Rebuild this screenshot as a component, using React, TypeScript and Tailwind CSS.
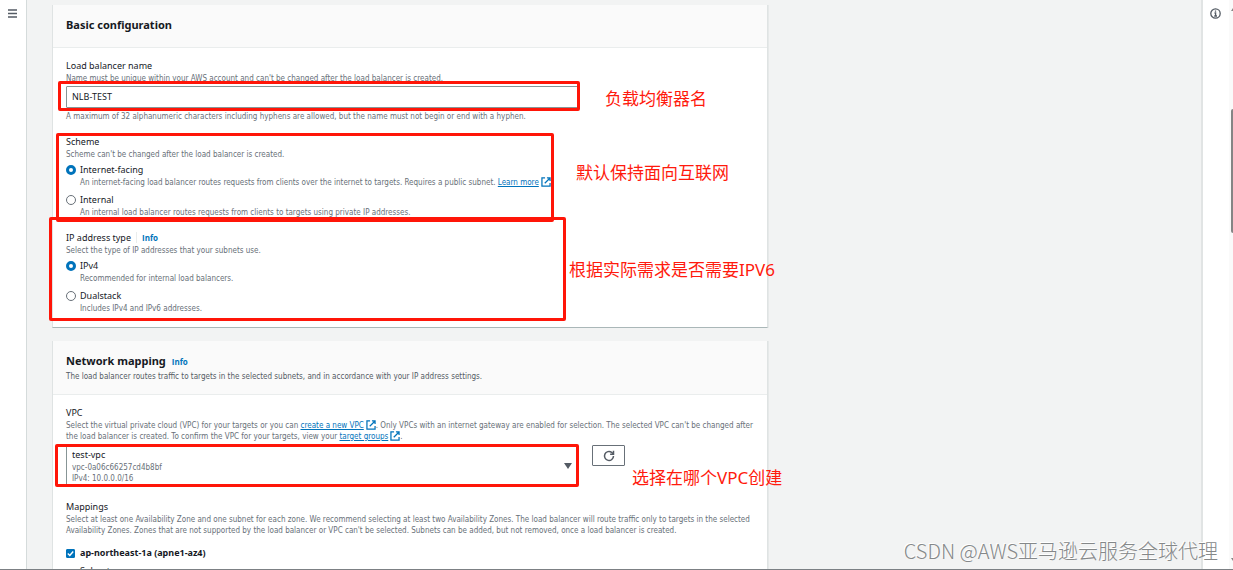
import type {ReactNode} from 'react';
import {clsx} from 'clsx';

const LABEL = 'block text-[9px] leading-[14px] text-[#16191f]';
const HINT = "font-['DejaVu_Sans_Condensed',sans-serif] text-[8px] leading-[11px] text-[#687078]";
const LINK = 'text-[#0073bb] underline';
const NOTE =
  "absolute whitespace-nowrap font-['Noto_Sans','Noto_Sans_CJK_SC',sans-serif] text-[17px] leading-6 text-[#ff1a0d]";
const MARK = 'pointer-events-none absolute rounded-xs border-[#ff1508] border-3';

function ExternalIcon() {
  return (
    <svg
      aria-hidden
      viewBox="0 0 16 16"
      className="ml-0.5 inline-block size-[10px] align-[-2px]"
      fill="none"
      stroke="currentColor"
      strokeWidth="2"
    >
      <path d="M6.5 1.5H1.5V14.5H14.5V9.5" />
      <path d="M9.5 1.5H14.5V6.5M14.5 1.5L6 10" />
    </svg>
  );
}

function ExternalLink({children}: {children: ReactNode}) {
  return (
    <a href="#" className={LINK}>
      {children}
      <ExternalIcon />
    </a>
  );
}

function InfoLink({className}: {className?: string}) {
  return (
    <a
      href="#"
      className={clsx("font-['Open_Sans',sans-serif] text-[8px] font-bold text-[#0073bb]", className)}
    >
      Info
    </a>
  );
}

function Panel({header, children}: {header: ReactNode; children: ReactNode}) {
  return (
    <section className="relative w-full max-w-[716px] border-x border-b border-x-[#dfe3e3] border-b-[#aab7b8] bg-white shadow-[1px_0_0_#e6e9e9]">
      <header className="border-b border-[#eaeded] bg-[#fafafa] px-[13px]">{header}</header>
      <div className="pb-[13px] pl-[13px] pr-2 pt-[11px]">{children}</div>
    </section>
  );
}

function RadioOption({
  name,
  value,
  label,
  checked,
  children
}: {
  name: string;
  value: string;
  label: string;
  checked?: boolean;
  children: ReactNode;
}) {
  const id = `${name}-${value}`;
  return (
    <div className="flex gap-1">
      <input
        id={id}
        type="radio"
        name={name}
        value={value}
        defaultChecked={checked}
        className="mt-[2px] size-[10px] shrink-0 appearance-none rounded-full border border-[#687078] bg-white checked:border-3 checked:border-[#0073bb]"
      />
      <div>
        <label htmlFor={id} className={LABEL}>
          {label}
        </label>
        <p className={HINT}>{children}</p>
      </div>
    </div>
  );
}

function BasicConfiguration() {
  return (
    <Panel
      header={
        <h2 className="pb-[14px] pt-3 text-[11px] font-bold leading-4 text-[#16191f]">
          Basic configuration
        </h2>
      }
    >
      <div>
        <label htmlFor="lb-name" className={LABEL}>
          Load balancer name
        </label>
        <p className={HINT}>
          Name must be unique within your AWS account and can't be changed after the load
          balancer is created.
        </p>
        <input
          id="lb-name"
          type="text"
          defaultValue="NLB-TEST"
          className="mb-[3px] mt-[2px] block h-[22px] w-full max-w-[512px] rounded-[1px] border border-[#879596] px-[5px] pb-0.5 text-[9px] text-[#16191f]"
        />
        <p className={HINT}>
          A maximum of 32 alphanumeric characters including hyphens are allowed, but the name
          must not begin or end with a hyphen.
        </p>
      </div>

      <fieldset className="mt-[13px]">
        <legend className={LABEL}>Scheme</legend>
        <p className={HINT}>Scheme can't be changed after the load balancer is created.</p>
        <div className="mt-[3px] flex flex-col gap-[5px]">
          <RadioOption name="scheme" value="internet-facing" label="Internet-facing" checked>
            An internet-facing load balancer routes requests from clients over the internet to
            targets. Requires a public subnet. <ExternalLink>Learn more</ExternalLink>
          </RadioOption>
          <RadioOption name="scheme" value="internal" label="Internal">
            An internal load balancer routes requests from clients to targets using private IP
            addresses.
          </RadioOption>
        </div>
      </fieldset>

      <fieldset className="mt-[13px]">
        <legend className={LABEL}>
          IP address type
          <InfoLink className="ml-[5px] border-l border-[#eaeded] pl-[5px]" />
        </legend>
        <p className={HINT}>Select the type of IP addresses that your subnets use.</p>
        <div className="mt-[3px] flex flex-col gap-[5px]">
          <RadioOption name="ip-type" value="ipv4" label="IPv4" checked>
            Recommended for internal load balancers.
          </RadioOption>
          <RadioOption name="ip-type" value="dualstack" label="Dualstack">
            Includes IPv4 and IPv6 addresses.
          </RadioOption>
        </div>
      </fieldset>

      <div className={clsx(MARK, 'left-[5px] top-[76px] h-[30px] w-[522px]')} />
      <div className={clsx(MARK, 'left-[3px] top-[128px] h-[89px] w-[498px]')} />
      <div className={clsx(MARK, '-left-[4px] top-[212px] h-[104px] w-[517px]')} />
      <span className={clsx(NOTE, 'left-[552px] top-[82px]')}>负载均衡器名</span>
      <span className={clsx(NOTE, 'left-[523px] top-[156px]')}>默认保持面向互联网</span>
      <span className={clsx(NOTE, 'left-[516px] top-[253px]')}>根据实际需求是否需要IPV6</span>
    </Panel>
  );
}

function NetworkMapping() {
  return (
    <Panel
      header={
        <div className="py-3">
          <h2 className="text-[11px] font-bold leading-4 text-[#16191f]">
            Network mapping
            <InfoLink className="ml-[6px]" />
          </h2>
          <p className="mt-px font-['DejaVu_Sans_Condensed',sans-serif] text-[8px] leading-[11px] text-[#545b64]">
            The load balancer routes traffic to targets in the selected subnets, and in
            accordance with your IP address settings.
          </p>
        </div>
      }
    >
      <label htmlFor="vpc" className={LABEL}>
        VPC
      </label>
      <p className={HINT}>
        Select the virtual private cloud (VPC) for your targets or you can{' '}
        <ExternalLink>create a new VPC</ExternalLink>. Only VPCs with an internet gateway are
        enabled for selection. The selected VPC can't be changed after the load balancer is
        created. To confirm the VPC for your targets, view your{' '}
        <ExternalLink>target groups</ExternalLink>.
      </p>
      <div className="mt-[3px] flex items-start gap-[14px]">
        <div className="grid w-full max-w-[512px]">
          <select
            id="vpc"
            className="col-start-1 row-start-1 h-[41px] appearance-none rounded-[1px] border border-[#879596] bg-white px-[5px] pb-[22px] text-[9px] text-[#16191f]"
          >
            <option>test-vpc</option>
          </select>
          <div className="pointer-events-none col-start-1 row-start-1 flex items-center justify-between px-[6px]">
            <div className={clsx(HINT, 'pt-[14px]')}>
              <p>vpc-0a06c66257cd4b8bf</p>
              <p>IPv4: 10.0.0.0/16</p>
            </div>
            <svg aria-hidden viewBox="0 0 8 6" className="h-[6px] w-2 fill-[#545b64]">
              <path d="M0 0H8L4 6Z" />
            </svg>
          </div>
        </div>
        <button
          type="button"
          aria-label="Refresh VPCs"
          className="flex h-[21px] w-[33px] shrink-0 items-center justify-center rounded-[1px] border border-[#687078] bg-white text-[#545b64]"
        >
          <svg
            aria-hidden
            viewBox="0 0 16 16"
            className="size-3"
            fill="none"
            stroke="currentColor"
            strokeWidth="2"
          >
            <path d="M14 8A6 6 0 1 1 11.5 3.1L13.5 5" />
            <path d="M14 1V5.5H9.5" />
          </svg>
        </button>
      </div>

      <fieldset className="mt-[14px]">
        <legend className={LABEL}>Mappings</legend>
        <p className={HINT}>
          Select at least one Availability Zone and one subnet for each zone. We recommend
          selecting at least two Availability Zones. The load balancer will route traffic only
          to targets in the selected Availability Zones. Zones that are not supported by the
          load balancer or VPC can't be selected. Subnets can be added, but not removed, once a
          load balancer is created.
        </p>
        <div className="mt-[10px] flex items-center gap-[5px]">
          <span className="grid size-[9px]">
            <input
              id="zone-1a"
              type="checkbox"
              defaultChecked
              className="col-start-1 row-start-1 size-[9px] appearance-none rounded-[1px] border border-[#687078] checked:border-[#0073bb] checked:bg-[#0073bb]"
            />
            <svg
              aria-hidden
              viewBox="0 0 9 9"
              className="pointer-events-none col-start-1 row-start-1 size-[9px]"
              fill="none"
              stroke="white"
              strokeWidth="1.4"
            >
              <path d="M1.8 4.6L3.8 6.5L7.2 2.5" />
            </svg>
          </span>
          <label htmlFor="zone-1a" className="text-[9px] font-bold leading-[14px] text-[#16191f]">
            ap-northeast-1a (apne1-az4)
          </label>
        </div>
        <p className={clsx(LABEL, 'ml-[14px] mt-1')}>Subnet</p>
      </fieldset>

      <div className={clsx(MARK, 'left-[2px] top-[103px] h-[43px] w-[524px]')} />
      <span className={clsx(NOTE, 'left-[579px] top-[125px]')}>选择在哪个VPC创建</span>
    </Panel>
  );
}

export default function App() {
  return (
    <div className="relative flex h-screen overflow-hidden border-b border-[#7c8084] bg-[#f2f3f3] font-['Noto_Sans',sans-serif]">
      <nav className="w-[27px] shrink-0 border-r border-[#d5dbdb] bg-white pl-2 pt-[9px]">
        <button type="button" aria-label="Open navigation" className="block text-[#545b64]">
          <svg aria-hidden viewBox="0 0 9 9" className="size-[9px]" stroke="currentColor">
            <path d="M0 1H9M0 4.5H9M0 8H9" strokeWidth="1.4" />
          </svg>
        </button>
      </nav>

      <main className="flex min-w-0 flex-1 flex-col gap-[13px] pl-[25px] pt-[5px]">
        <BasicConfiguration />
        <NetworkMapping />
      </main>

      <aside className="flex w-8 shrink-0 justify-between border-l-2 border-[#e1e4e4] bg-white">
        <button
          type="button"
          aria-label="Open help panel"
          className="ml-[7px] mt-2 block self-start text-[#545b64]"
        >
          <svg aria-hidden viewBox="0 0 11 11" className="size-[11px]" fill="none" stroke="currentColor">
            <circle cx="5.5" cy="5.5" r="4.7" strokeWidth="1.3" />
            <path d="M5.5 2.5V3.7M4.5 5H5.6V8M4.2 8H7" strokeWidth="1.3" />
          </svg>
        </button>
        <div className="flex w-1 flex-col items-end justify-between bg-[#fafafa] pb-2 pt-2">
          <svg aria-hidden viewBox="0 0 2 3" className="h-[3px] w-[2px] fill-[#858585]">
            <path d="M0 3L2 0V3Z" />
          </svg>
          <div className="mb-auto mt-[98px] h-[124px] w-[2px] rounded-l-xs bg-[#858585]" />
          <svg aria-hidden viewBox="0 0 2 3" className="h-[3px] w-[2px] fill-[#858585]">
            <path d="M0 0H2V3Z" />
          </svg>
        </div>
      </aside>

      <p className="absolute bottom-1 right-[15px] whitespace-nowrap font-['Noto_Sans_CJK_SC',sans-serif] text-[20px] font-light leading-7 text-[#858889] [text-shadow:-1px_-1px_0_#ffffff]">
        CSDN @AWS亚马逊云服务全球代理
      </p>
    </div>
  );
}
